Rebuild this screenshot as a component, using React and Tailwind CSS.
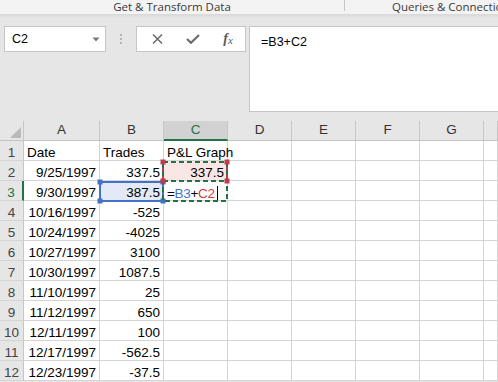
import React from "react";

const COLS = ["A", "B", "C", "D", "E", "F", "G", ""];
const WIDTHS = ["w-[76px]", "w-[64px]", "w-[64px]", "w-[64px]", "w-[64px]", "w-[64px]", "w-[64px]", "flex-1"];

const ROWS = [
  ["Date", "Trades", "P&L Graph"],
  ["9/25/1997", "337.5", "337.5"],
  ["9/30/1997", "387.5", "formula"],
  ["10/16/1997", "-525"],
  ["10/24/1997", "-4025"],
  ["10/27/1997", "3100"],
  ["10/30/1997", "1087.5"],
  ["11/10/1997", "25"],
  ["11/12/1997", "650"],
  ["12/11/1997", "100"],
  ["12/17/1997", "-562.5"],
  ["12/23/1997", "-37.5"],
];

function Formula() {
  return (
    <span className="tracking-[-0.3px]">
      =<span className="text-[#4472c4]">B3</span>+<span className="text-[#e0383e]">C2</span>
      <span className="inline-block w-px h-[15px] bg-black align-[-3px] ml-[2px]" />
    </span>
  );
}

function Cell({ value, col, row }) {
  const isHeaderText = row === 0;
  const right = !isHeaderText && value && value !== "formula";
  let bg = "";
  if (row === 2 && col === 1) bg = "bg-[#e3eaf6]";
  if (row === 1 && col === 2) bg = "bg-[#fbe6e6]";
  return (
    <div
      className={`${WIDTHS[col]} shrink-0 h-[20px] border-r border-b border-[#d4d4d4] pt-[5px] leading-[14px] px-[3px] whitespace-nowrap ${right ? "text-right" : "text-left"} ${bg}`}
    >
      {value === "formula" ? <Formula /> : value}
    </div>
  );
}

export default function App() {
  return (
    <div className="w-[498px] h-[382px] overflow-hidden bg-[#e6e6e6] font-['Liberation_Sans',Arial,sans-serif] text-black">
      {/* ribbon group labels */}
      <div className="h-[14px] bg-[#f3f3f3] flex text-[11.5px] leading-[14px] text-[#3a3a3a] font-['Open_Sans','Liberation_Sans',sans-serif] overflow-hidden">
        <div className="w-[345px] shrink-0 text-center border-r border-[#c6c6c6] h-[11px]">Get &amp; Transform Data</div>
        <div className="pl-[47px] shrink-0 whitespace-nowrap">Queries &amp; Connections</div>
      </div>
      <div className="h-[4px] bg-gradient-to-b from-[#d8d8d8] to-[#e6e6e6]" />

      {/* formula bar */}
      <div className="h-[103px] pt-[8px] flex items-start">
        <div className="ml-[4px] w-[102px] h-[26px] bg-white border border-[#c6c6c6] flex items-center pl-[7px] pr-[5px] text-[12.5px]">
          <span className="flex-1">C2</span>
          <svg width="8" height="5" viewBox="0 0 8 5">
            <path d="M0.5 0.5 H7.5 L4 4.5 Z" fill="#7a7a7a" />
          </svg>
        </div>
        <div className="w-[30px] h-[26px] flex flex-col items-center justify-center gap-[2px]">
          <span className="w-[2px] h-[2px] bg-[#b4b4b4]" />
          <span className="w-[2px] h-[2px] bg-[#b4b4b4]" />
          <span className="w-[2px] h-[2px] bg-[#b4b4b4]" />
        </div>
        <div className="w-[110px] h-[26px] bg-white border border-[#c6c6c6] flex items-center">
          <div className="w-[36px] flex justify-center pl-[4px]">
            <svg width="11" height="10" viewBox="0 0 11 10">
              <path d="M1 0.5 L10 9.5 M10 0.5 L1 9.5" stroke="#6b6b6b" strokeWidth="1.5" fill="none" />
            </svg>
          </div>
          <div className="w-[36px] flex justify-center pl-[4px]">
            <svg width="14" height="10" viewBox="0 0 14 10">
              <path d="M1 5 L5 8.8 L13 1" stroke="#6b6b6b" strokeWidth="2.2" fill="none" />
            </svg>
          </div>
          <div className="w-[36px] flex justify-center pl-[2px] font-['Liberation_Serif',serif] italic font-bold text-[14px] text-[#5a5a5a] leading-none">
            <span>f</span>
            <span className="text-[11px] mt-[3px] font-normal">x</span>
          </div>
        </div>
        <div className="ml-[3px] flex-1 h-[86px] bg-white border-l border-t border-b border-[#c6c6c6] pl-[11px] pt-[6px] text-[12.5px]">
          =B3+C2
        </div>
      </div>

      {/* grid */}
      <div className="relative text-[13.5px]">
        <div className="flex h-[20px]">
          <div className="w-[24px] shrink-0 border-r border-b border-[#c6c6c6] relative">
            <svg className="absolute left-[10px] top-[6px]" width="11" height="11" viewBox="0 0 11 11">
              <path d="M11 0 V11 H0 Z" fill="#b9b9b9" />
            </svg>
          </div>
          {COLS.map((c, i) => (
            <div
              key={i}
              className={`${WIDTHS[i]} shrink-0 text-center pt-[2px] leading-[14px] border-r border-[#c6c6c6] ${
                c === "C" ? "bg-[#d2d2d2] text-[#217346] border-b-2 border-b-[#217346]" : "text-[#333] border-b"
              }`}
            >
              {c}
            </div>
          ))}
        </div>
        {ROWS.map((r, ri) => (
          <div key={ri} className="flex h-[20px] bg-white">
            <div
              className={`w-[24px] shrink-0 text-center pt-[5px] leading-[14px] border-b border-[#d4d4d4] bg-[#e6e6e6] ${
                ri === 2 ? "border-r-2 border-r-[#217346] text-[#217346] bg-[#d2d2d2]" : "border-r border-r-[#c6c6c6] text-[#444]"
              }`}
            >
              {ri + 1}
            </div>
            {COLS.map((_, ci) => (
              <Cell key={ci} col={ci} row={ri} value={r[ci]} />
            ))}
          </div>
        ))}

        {/* reference and edit marquees */}
        <svg className="absolute left-0 top-0 pointer-events-none" width="498" height="261">
          <rect x="100" y="61" width="63" height="19" fill="none" stroke="#4472c4" strokeWidth="2" />
          {[[100, 61], [163, 61], [100, 80], [163, 80]].map(([x, y], i) => (
            <rect key={i} x={x - 2.5} y={y - 2.5} width="5" height="5" fill="#4472c4" />
          ))}
          <path d="M163 42 V60 M227 42 V60" stroke="#c23b4b" strokeWidth="2" />
          <rect x="163" y="41" width="64" height="39" fill="none" stroke="#217346" strokeWidth="2" strokeDasharray="5 3" />
          <path d="M163 60 H227" stroke="#217346" strokeWidth="2" strokeDasharray="5 3" />
          {[[163, 41], [227, 41], [163, 60], [227, 60]].map(([x, y], i) => (
            <rect key={i} x={x - 2.5} y={y - 2.5} width="5" height="5" fill="#c23b4b" />
          ))}
        </svg>
      </div>
    </div>
  );
}
